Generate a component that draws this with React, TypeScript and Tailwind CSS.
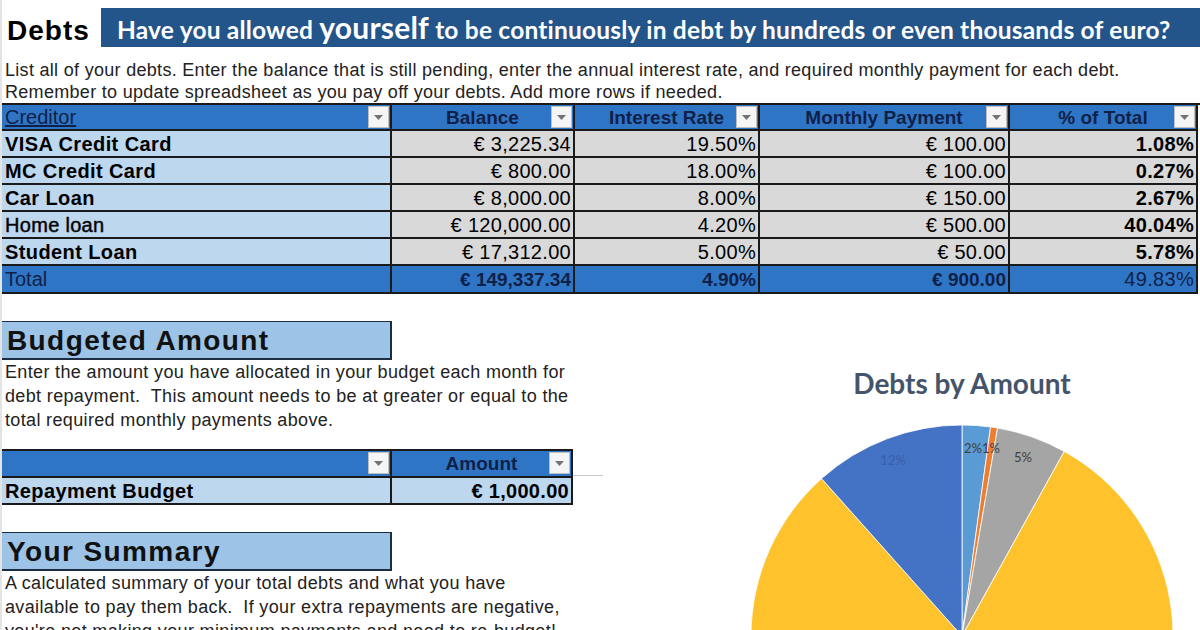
import React from 'react';

const arial = "font-['Liberation_Sans',Arial,sans-serif]";
const lato = "font-['Lato','Open_Sans',sans-serif]";

type Debt = { name: string; bal: string; rate: string; pay: string; pct: string; light?: boolean };

const debts: Debt[] = [
  { name: 'VISA Credit Card', bal: '€ 3,225.34', rate: '19.50%', pay: '€ 100.00', pct: '1.08%' },
  { name: 'MC Credit Card', bal: '€ 800.00', rate: '18.00%', pay: '€ 100.00', pct: '0.27%' },
  { name: 'Car Loan', bal: '€ 8,000.00', rate: '8.00%', pay: '€ 150.00', pct: '2.67%' },
  { name: 'Home loan', bal: '€ 120,000.00', rate: '4.20%', pay: '€ 500.00', pct: '40.04%', light: true },
  { name: 'Student Loan', bal: '€ 17,312.00', rate: '5.00%', pay: '€ 50.00', pct: '5.78%' },
];

// little filter button in the table header
const Drop = ({ className = '' }: { className?: string }) => (
  <span className={`absolute top-[1px] w-[21px] h-[22px] bg-[#f5f5f5] border border-[#bfbfbf] flex items-center justify-center ${className}`}>
    <svg width="9" height="5" viewBox="0 0 9 5"><path d="M0 0h9L4.5 5z" fill="#737373" /></svg>
  </span>
);

const SectionBox = ({ title }: { title: string }) => (
  <div className="w-[390px] h-[39px] bg-[#9dc3e6] border-t border-r-2 border-b-2 border-[#1f2d44] flex items-center pl-[5px] pt-[2px]">
    <span className={`${arial} font-bold text-[28px] tracking-[1.4px] leading-none text-[#111]`}>{title}</span>
  </div>
);

const PieChart = () => {
  const r = 211;
  return (
    <svg width="440" height="232" viewBox="-220 -238 440 232" className="block">
      <g stroke="#ffffff" strokeWidth="0.8">
        <path d={`M0 0 L0 -${r} A${r} ${r} 0 0 1 28.55 -209.06 Z`} fill="#5b9bd5" />
        <path d={`M0 0 L28.55 -209.06 A${r} ${r} 0 0 1 35.57 -207.98 Z`} fill="#ed7d31" />
        <path d={`M0 0 L35.57 -207.98 A${r} ${r} 0 0 1 102.27 -184.56 Z`} fill="#a5a5a5" />
        <path d={`M0 0 L102.27 -184.56 A${r} ${r} 0 1 1 -140.45 -157.46 Z`} fill="#fec22d" />
        <path d={`M0 0 L-140.45 -157.46 A${r} ${r} 0 0 1 0 -${r} Z`} fill="#4472c4" />
      </g>
      <g fontFamily="Lato, 'Open Sans', sans-serif" fontSize="13">
        <text x="11" y="-183" textAnchor="middle" fill="#404040">2%</text>
        <text x="29" y="-183" textAnchor="middle" fill="#404040">1%</text>
        <text x="61" y="-174" textAnchor="middle" fill="#404040">5%</text>
        <text x="-69" y="-171" textAnchor="middle" fill="#3660ab">12%</text>
      </g>
    </svg>
  );
};

export default function App() {
  return (
    <div className="w-[1200px] h-[630px] overflow-hidden bg-white relative text-black border-l-2 border-[#e4e4e4]">
      {/* title row */}
      <div className="flex items-start h-[47px]">
        <div className="w-[99px] pl-[5px] pt-[17px]">
          <span className={`${arial} font-bold text-[28px] leading-none tracking-[1px]`}>Debts</span>
        </div>
        <div className="flex-1 h-[39px] mt-[8px] bg-[#23548a] flex items-center pl-[16px]">
          <span className={`${lato} font-bold text-white text-[24.5px] tracking-[0.2px] leading-none whitespace-nowrap`}>
            Have you allowed <span className="text-[30px]">yourself</span> to be continuously in debt by hundreds or even thousands of euro?
          </span>
        </div>
      </div>

      <div className={`${arial} text-[18px] tracking-[0.3px] leading-[22px] pl-[3px] pt-[12px] text-[#222] whitespace-nowrap`}>
        <p>List all of your debts. Enter the balance that is still pending, enter the annual interest rate, and required monthly payment for each debt.</p>
        <p>Remember to update spreadsheet as you pay off your debts. Add more rows if needed.</p>
      </div>

      {/* debts table */}
      <div className={`${arial} grid grid-cols-[390px_183px_185px_250px_188px] border-t-2 border-[#1a1a1a] text-[20px] leading-none`}>
        <div className="relative h-[26px] bg-[#2f75c5] border-r-2 border-b-2 border-[#1a1a1a] flex items-center pl-[3px]">
          <span className="text-[#0f2148] underline">Creditor</span>
          <Drop className="right-[1px]" />
        </div>
        {['Balance', 'Interest Rate', 'Monthly Payment', '% of Total'].map(h => (
          <div key={h} className="relative h-[26px] bg-[#2f75c5] border-r-2 border-b-2 border-[#1a1a1a] flex items-center justify-center">
            <span className="font-bold text-[#0f2148] text-[19px]">{h}</span>
            <Drop className="right-[1px]" />
          </div>
        ))}

        {debts.map(d => (
          <React.Fragment key={d.name}>
            <div className="h-[27px] bg-[#bdd7ee] border-r-2 border-b-2 border-[#1a1a1a] flex items-center pl-[3px]">
              <span className={d.light ? 'text-[20px] [-webkit-text-stroke:0.5px_#111] tracking-[0.3px]' : 'font-bold text-[20px] tracking-[0.4px]'}>{d.name}</span>
            </div>
            <div className="h-[27px] bg-[#d9d9d9] border-r-2 border-b-2 border-[#1a1a1a] flex items-center justify-end pr-[2px] tracking-[0.3px]">{d.bal}</div>
            <div className="h-[27px] bg-[#d9d9d9] border-r-2 border-b-2 border-[#1a1a1a] flex items-center justify-end pr-[2px] tracking-[0.3px]">{d.rate}</div>
            <div className="h-[27px] bg-[#d9d9d9] border-r-2 border-b-2 border-[#1a1a1a] flex items-center justify-end pr-[2px] tracking-[0.3px]">{d.pay}</div>
            <div className="h-[27px] bg-[#d9d9d9] border-r-2 border-b-2 border-[#1a1a1a] flex items-center justify-end pr-[2px] font-bold tracking-[0.3px]">{d.pct}</div>
          </React.Fragment>
        ))}

        <div className="h-[28px] bg-[#2f75c5] border-r-2 border-b-2 border-[#1a1a1a] flex items-center pl-[3px] text-[#0f2148]">Total</div>
        <div className="h-[28px] bg-[#2f75c5] border-r-2 border-b-2 border-[#1a1a1a] flex items-center justify-end pr-[2px] font-bold text-[#0f2148] text-[19px]">€ 149,337.34</div>
        <div className="h-[28px] bg-[#2f75c5] border-r-2 border-b-2 border-[#1a1a1a] flex items-center justify-end pr-[2px] font-bold text-[#0f2148] text-[19px]">4.90%</div>
        <div className="h-[28px] bg-[#2f75c5] border-r-2 border-b-2 border-[#1a1a1a] flex items-center justify-end pr-[2px] font-bold text-[#0f2148] text-[19px]">€ 900.00</div>
        <div className="h-[28px] bg-[#2f75c5] border-r-2 border-b-2 border-[#1a1a1a] flex items-center justify-end pr-[2px] text-[#0f2148] tracking-[0.3px]">49.83%</div>
      </div>

      {/* lower half */}
      <div className="flex">
        <div className="w-[598px] pt-[27px]">
          <SectionBox title="Budgeted Amount" />
          <div className={`${arial} text-[18px] tracking-[0.35px] leading-[24px] pl-[3px] text-[#222] whitespace-nowrap`}>
            <p>Enter the amount you have allocated in your budget each month for</p>
            <p>debt repayment.&nbsp; This amount needs to be at greater or equal to the</p>
            <p>total required monthly payments above.</p>
          </div>

          <div className={`${arial} mt-[17px] relative text-[20px] leading-none`}>
            <div className="grid grid-cols-[390px_181px] border-t-2 border-[#1a1a1a] w-[571px]">
              <div className="relative h-[27px] bg-[#2f75c5] border-r-2 border-b-2 border-[#1a1a1a]">
                <Drop className="right-[1px]" />
              </div>
              <div className="relative h-[27px] bg-[#2f75c5] border-r-2 border-b-2 border-[#1a1a1a] flex items-center justify-center">
                <span className="font-bold text-[#0f2148] text-[19px]">Amount</span>
                <Drop className="right-[1px]" />
              </div>
              <div className="h-[27px] bg-[#bdd7ee] border-r-2 border-b-2 border-[#1a1a1a] flex items-center pl-[3px]">
                <span className="font-bold tracking-[0.4px]">Repayment Budget</span>
              </div>
              <div className="h-[27px] bg-[#bdd7ee] border-r-2 border-b-2 border-[#1a1a1a] flex items-center justify-end pr-[2px]">
                <span className="font-bold tracking-[0.3px]">€ 1,000.00</span>
              </div>
            </div>
            <div className="absolute left-[571px] top-[26px] w-[30px] h-px bg-[#c8c8c8]" />
          </div>

          <div className="mt-[27px]">
            <SectionBox title="Your Summary" />
          </div>
          <div className={`${arial} text-[18px] tracking-[0.35px] leading-[24px] pl-[3px] text-[#222] whitespace-nowrap`}>
            <p>A calculated summary of your total debts and what you have</p>
            <p>available to pay them back.&nbsp; If your extra repayments are negative,</p>
            <p>you're not making your minimum payments and need to re-budget!</p>
          </div>
        </div>

        <div className="flex-1">
          <div className="ml-[142px] w-[440px] pt-[74px]">
            <p className={`${lato} font-bold text-[28px] leading-[30px] text-[#44546a] text-center`}>Debts by Amount</p>
            <PieChart />
          </div>
        </div>
      </div>
    </div>
  );
}
